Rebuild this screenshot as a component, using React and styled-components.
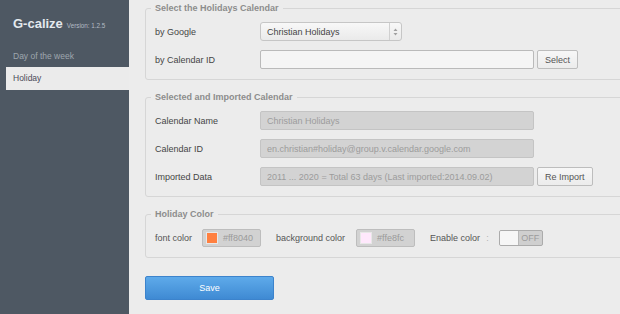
import styled, { createGlobalStyle } from "styled-components";

const GlobalStyle = createGlobalStyle`
  html, body {
    margin: 0;
    padding: 0;
    height: 100%;
    overflow: hidden;
    background: #ececec;
  }
  body {
    font-family: "Liberation Sans", Arial, sans-serif;
    font-size: 9px;
    color: #454545;
  }
  #root {
    height: 100%;
  }
`

const Layout = styled.div`
    display: flex;
    height: 100%;
    min-height: 314px;
`

const Sidebar = styled.nav`
    width: 129px;
    flex: none;
    background: #4e5863;
    padding-top: 15px;
    box-sizing: border-box;
`

const Brand = styled.div`
    display: flex;
    align-items: baseline;
    gap: 4px;
    padding-left: 13px;
    height: 18px;
    line-height: 18px;
    margin-bottom: 12px;
`

const Logo = styled.span`
    font-size: 13px;
    font-weight: bold;
    color: #e4e9ee;
`

const Version = styled.span`
    font-size: 6.3px;
    color: #b3bbc3;
`

const NavItem = styled.div`
    margin-left: 6px;
    padding-left: 7px;
    height: ${p => p.$active ? "23px" : "22px"};
    line-height: ${p => p.$active ? "23px" : "22px"};
    font-size: 8.5px;
    color: ${p => p.$active ? "#4a4a58" : "#9ea6ae"};
    background: ${p => p.$active ? "#ebebeb" : "transparent"};
`

const Main = styled.main`
    flex: 1;
    padding: 2px 0 0 16px;
    overflow: hidden;
`

const Content = styled.div`
    width: 500px;
`

const Group = styled.fieldset`
    margin: 0 0 11px;
    padding: 8px 0 10px 9px;
    border: 1px solid #d6d6d6;
    border-radius: 3px;
    min-width: 0;
`

const Legend = styled.legend`
    margin-left: -4px;
    padding: 0 4px;
    font-size: 9px;
    line-height: 12px;
    font-weight: bold;
    color: #8c8c8c;
`

const Rows = styled.div`
    display: flex;
    flex-direction: column;
    gap: 9px;
`

const Row = styled.div`
    display: flex;
    align-items: center;
    height: 19px;
    gap: 3px;
`

const Label = styled.span`
    width: 102px;
    flex: none;
`

const Field = styled.input`
    box-sizing: border-box;
    width: 274px;
    height: 19px;
    margin: 0;
    padding: 0 6px;
    font: inherit;
    color: ${p => p.disabled ? "#9c9c9c" : "#444"};
    background: ${p => p.disabled ? "#d3d3d3" : "#f5f5f5"};
    border: 1px solid ${p => p.disabled ? "#c4c4c4" : "#bababa"};
    border-radius: 2px;
    outline: none;
`

const Button = styled.button`
    height: 19px;
    margin: 0;
    padding: 0 7px;
    font: inherit;
    color: #555;
    background: linear-gradient(#f7f7f7, #ececec);
    border: 1px solid #bdbdbd;
    border-radius: 2px;
`

const SelectBox = styled.div`
    box-sizing: border-box;
    width: 142px;
    height: 19px;
    display: flex;
    align-items: center;
    background: linear-gradient(#f8f8f8, #eaeaea);
    border: 1px solid #c6c6c6;
    border-radius: 3px;
    color: #444;
    > span {
        flex: 1;
        padding-left: 6px;
    }
`

const SelectArrow = styled.div`
    width: 11px;
    height: 100%;
    display: flex;
    align-items: center;
    justify-content: center;
    border-left: 1px solid #d0d0d0;
`

const ColorRow = styled.div`
    display: flex;
    align-items: center;
    height: 19px;
`

const ColorLabel = styled.span`
    margin-right: ${p => p.$gap || 10}px;
    color: ${p => p.$muted ? "#b0b0b0" : "#555"};
`

const ColorBox = styled.div`
    box-sizing: border-box;
    width: 59px;
    height: 18px;
    margin-right: 15px;
    display: flex;
    align-items: center;
    gap: 5px;
    padding-left: 3px;
    background: #d2d2d2;
    border: 1px solid #bdbdbd;
    border-radius: 2px;
    color: #9a9a9a;
`

const Swatch = styled.span`
    width: 12px;
    height: 12px;
    background: ${p => p.$color};
    border: 1px solid #e8e8e8;
    box-sizing: border-box;
`

const Toggle = styled.div`
    box-sizing: border-box;
    width: 44px;
    height: 16px;
    display: flex;
    background: #cfcfcf;
    border: 1px solid #ababab;
    border-radius: 2px;
    overflow: hidden;
    > span {
        flex: 1;
        text-align: center;
        line-height: 14px;
        color: #9c9c9c;
    }
`

const Knob = styled.div`
    width: 18px;
    background: #f6f6f6;
    border-right: 1px solid #b8b8b8;
`

const SaveButton = styled.button`
    width: 129px;
    height: 24px;
    margin: 7px 0 0;
    font: inherit;
    color: #fff;
    background: linear-gradient(#5eaaea, #3f8ad3);
    border: 1px solid #3c83cc;
    border-radius: 2px;
`

const App = () => {
    return <Layout>
        <GlobalStyle />
        <Sidebar>
            <Brand>
                <Logo>G-calize</Logo>
                <Version>Version: 1.2.5</Version>
            </Brand>
            <NavItem>Day of the week</NavItem>
            <NavItem $active>Holiday</NavItem>
        </Sidebar>
        <Main>
            <Content>
                <Group>
                    <Legend>Select the Holidays Calendar</Legend>
                    <Rows>
                        <Row>
                            <Label>by Google</Label>
                            <SelectBox>
                                <span>Christian Holidays</span>
                                <SelectArrow>
                                    <svg width="5" height="8" viewBox="0 0 5 8">
                                        <path d="M2.5 0.5 L4.5 3 H0.5 Z M2.5 7.5 L4.5 5 H0.5 Z" fill="#a0a0a0" />
                                    </svg>
                                </SelectArrow>
                            </SelectBox>
                        </Row>
                        <Row>
                            <Label>by Calendar ID</Label>
                            <Field defaultValue="" />
                            <Button>Select</Button>
                        </Row>
                    </Rows>
                </Group>
                <Group>
                    <Legend>Selected and Imported Calendar</Legend>
                    <Rows>
                        <Row>
                            <Label>Calendar Name</Label>
                            <Field disabled value="Christian Holidays" readOnly />
                        </Row>
                        <Row>
                            <Label>Calendar ID</Label>
                            <Field disabled value="en.christian#holiday@group.v.calendar.google.com" readOnly />
                        </Row>
                        <Row>
                            <Label>Imported Data</Label>
                            <Field disabled value="2011 ... 2020 = Total 63 days (Last imported:2014.09.02)" readOnly />
                            <Button>Re Import</Button>
                        </Row>
                    </Rows>
                </Group>
                <Group>
                    <Legend>Holiday Color</Legend>
                    <ColorRow>
                        <ColorLabel>font color</ColorLabel>
                        <ColorBox>
                            <Swatch $color="#ff8040" />
                            #ff8040
                        </ColorBox>
                        <ColorLabel $gap={11}>background color</ColorLabel>
                        <ColorBox>
                            <Swatch $color="#ffe8fc" />
                            #ffe8fc
                        </ColorBox>
                        <ColorLabel $gap={6}>Enable color</ColorLabel>
                        <ColorLabel $gap={10} $muted>:</ColorLabel>
                        <Toggle>
                            <Knob />
                            <span>OFF</span>
                        </Toggle>
                    </ColorRow>
                </Group>
                <SaveButton>Save</SaveButton>
            </Content>
        </Main>
    </Layout>;
};

export default App;
